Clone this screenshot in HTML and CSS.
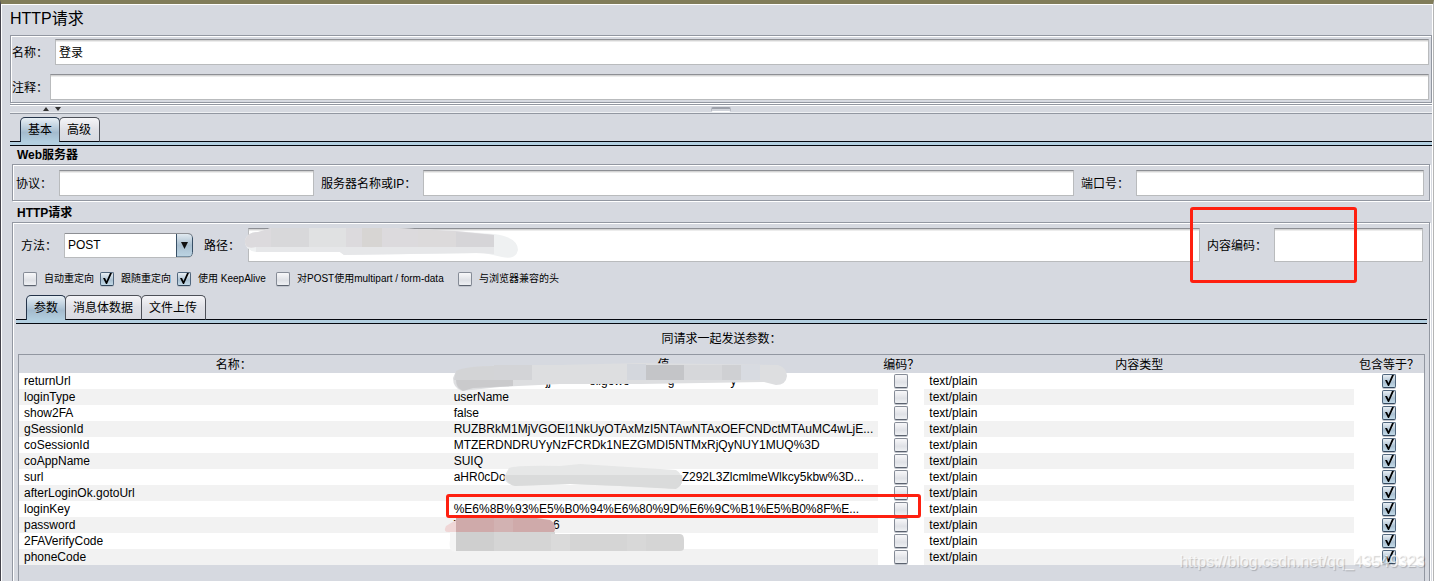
FILE: index.html
```
<!DOCTYPE html>
<html lang="zh-CN">

<head>
	<meta charset="UTF-8" />
	<meta name="viewport" content="width=device-width, initial-scale=1.0" />

	<title>HTTP请求</title>

	<link rel="stylesheet" href="styles.css">
</head>

<body>
	<main class="window">
		<h1>HTTP请求</h1>

		<div class="panel namePanel">
			<div class="row">
				<label class="wide" for="name">名称：</label>
				<input class="field" id="name" type="text" value="登录" />
			</div>
			<div class="row">
				<label for="comment">注释：</label>
				<input class="field" id="comment" type="text" />
			</div>
		</div>

		<div class="splitter">
			<svg class="arrows" width="18" height="5" viewBox="0 0 18 5">
				<path d="M0 4h6L3 0z M12 0h6l-3 4z" fill="#333" />
			</svg>
			<span class="grip"></span>
		</div>

		<div class="tabs">
			<button class="tab selected" type="button">基本</button>
			<button class="tab" type="button">高级</button>
		</div>

		<h2>Web服务器</h2>
		<div class="panel row serverPanel">
			<label for="protocol">协议：</label>
			<input class="field protocol" id="protocol" type="text" />
			<label for="server">服务器名称或IP：</label>
			<input class="field server" id="server" type="text" />
			<label for="port">端口号：</label>
			<input class="field port" id="port" type="text" />
		</div>

		<h2 class="second">HTTP请求</h2>
		<div class="panel requestPanel">
			<div class="row requestRow">
				<label for="method">方法：</label>
				<select id="method">
					<option>POST</option>
				</select>
				<label for="path">路径：</label>
				<div class="pathBox">
					<input class="field tall" id="path" type="text" />
					<svg class="smudge pathSmudge" width="278" height="34" viewBox="0 0 278 34">
						<path d="M14 4L27 0H150L212 3L250 6Q274 9 274 22Q272 32 258 29L240 25L100 27L96 24H12Q0 22 1 12Q4 4 14 4z" fill="#eff1f2" />
						<path d="M14 4L27 0H150L212 3L250 7V19H12Q0 22 1 12Q4 4 14 4z" fill="#dcdadd" />
						<path d="M27 0h38v19H27z" fill="#d8d8da" />
						<path d="M65 0h37v19H65z" fill="#e0e1e2" />
						<path d="M118 0h20v19h-20z" fill="#d7d5d3" />
						<path d="M174 1l38 3v15h-38z" fill="#dcdadb" />
						<path d="M212 4l38 3v12h-38z" fill="#d6d5d8" />
						<path d="M12 19h238v7l-18-1-132 2-4-3H12z" fill="#e6e7e9" />
					</svg>
				</div>
				<div class="row encodingBox">
					<label for="encoding">内容编码：</label>
					<input class="field tall encoding" id="encoding" type="text" />
					<span class="mark encodingMark"></span>
				</div>
			</div>

			<div class="options">
				<label><input type="checkbox" />自动重定向</label>
				<label><input type="checkbox" checked />跟随重定向</label>
				<label><input type="checkbox" checked />使用 KeepAlive</label>
				<label><input type="checkbox" />对POST使用multipart / form-data</label>
				<label><input type="checkbox" />与浏览器兼容的头</label>
			</div>

			<div class="tabs inner">
				<button class="tab selected" type="button">参数</button>
				<button class="tab" type="button">消息体数据</button>
				<button class="tab" type="button">文件上传</button>
			</div>

			<h3>同请求一起发送参数：</h3>

			<div class="tableBox">
				<table>
					<colgroup>
						<col />
						<col />
						<col class="encodeCol" />
						<col />
						<col class="equalsCol" />
					</colgroup>
					<thead>
						<tr>
							<th>名称：</th>
							<th>值</th>
							<th>编码？</th>
							<th>内容类型</th>
							<th>包含等于？</th>
						</tr>
					</thead>
					<tbody>
						<tr>
							<td>returnUrl</td>
							<td><span class="covered long"></span>jj<span class="covered short"></span>eilgowo<span class="covered short"></span>g<span class="covered medium"></span>y</td>
							<td class="check"><input type="checkbox" aria-label="编码 returnUrl" /></td>
							<td>text/plain</td>
							<td class="check"><input type="checkbox" aria-label="包含等于 returnUrl" checked /></td>
						</tr>
						<tr>
							<td>loginType</td>
							<td>userName</td>
							<td class="check"><input type="checkbox" aria-label="编码 loginType" /></td>
							<td>text/plain</td>
							<td class="check"><input type="checkbox" aria-label="包含等于 loginType" checked /></td>
						</tr>
						<tr>
							<td>show2FA</td>
							<td>false</td>
							<td class="check"><input type="checkbox" aria-label="编码 show2FA" /></td>
							<td>text/plain</td>
							<td class="check"><input type="checkbox" aria-label="包含等于 show2FA" checked /></td>
						</tr>
						<tr>
							<td>gSessionId</td>
							<td>RUZBRkM1MjVGOEI1NkUyOTAxMzI5NTAwNTAxOEFCNDctMTAuMC4wLjE...</td>
							<td class="check"><input type="checkbox" aria-label="编码 gSessionId" /></td>
							<td>text/plain</td>
							<td class="check"><input type="checkbox" aria-label="包含等于 gSessionId" checked /></td>
						</tr>
						<tr>
							<td>coSessionId</td>
							<td>MTZERDNDRUYyNzFCRDk1NEZGMDI5NTMxRjQyNUY1MUQ%3D</td>
							<td class="check"><input type="checkbox" aria-label="编码 coSessionId" /></td>
							<td>text/plain</td>
							<td class="check"><input type="checkbox" aria-label="包含等于 coSessionId" checked /></td>
						</tr>
						<tr>
							<td>coAppName</td>
							<td>SUIQ</td>
							<td class="check"><input type="checkbox" aria-label="编码 coAppName" /></td>
							<td>text/plain</td>
							<td class="check"><input type="checkbox" aria-label="包含等于 coAppName" checked /></td>
						</tr>
						<tr>
							<td>surl</td>
							<td>aHR0cDo<span class="covered url"></span>Z292L3ZlcmlmeWlkcy5kbw%3D...</td>
							<td class="check"><input type="checkbox" aria-label="编码 surl" /></td>
							<td>text/plain</td>
							<td class="check"><input type="checkbox" aria-label="包含等于 surl" checked /></td>
						</tr>
						<tr>
							<td>afterLoginOk.gotoUrl</td>
							<td></td>
							<td class="check"><input type="checkbox" aria-label="编码 afterLoginOk.gotoUrl" /></td>
							<td>text/plain</td>
							<td class="check"><input type="checkbox" aria-label="包含等于 afterLoginOk.gotoUrl" checked /></td>
						</tr>
						<tr>
							<td>loginKey</td>
							<td>%E6%8B%93%E5%B0%94%E6%80%9D%E6%9C%B1%E5%B0%8F%E...</td>
							<td class="check"><input type="checkbox" aria-label="编码 loginKey" /></td>
							<td>text/plain</td>
							<td class="check"><input type="checkbox" aria-label="包含等于 loginKey" checked /></td>
						</tr>
						<tr>
							<td>password</td>
							<td>T<span class="covered long"></span>6</td>
							<td class="check"><input type="checkbox" aria-label="编码 password" /></td>
							<td>text/plain</td>
							<td class="check"><input type="checkbox" aria-label="包含等于 password" checked /></td>
						</tr>
						<tr>
							<td>2FAVerifyCode</td>
							<td></td>
							<td class="check"><input type="checkbox" aria-label="编码 2FAVerifyCode" /></td>
							<td>text/plain</td>
							<td class="check"><input type="checkbox" aria-label="包含等于 2FAVerifyCode" checked /></td>
						</tr>
						<tr>
							<td>phoneCode</td>
							<td></td>
							<td class="check"><input type="checkbox" aria-label="编码 phoneCode" /></td>
							<td>text/plain</td>
							<td class="check"><input type="checkbox" aria-label="包含等于 phoneCode" checked /></td>
						</tr>
					</tbody>
				</table>

				<!-- brushed-out values -->
				<svg class="smudge tableSmudge" width="350" height="200" viewBox="440 360 350 200">
					<path d="M456 371Q470 364 560 365L640 363L778 365Q787 368 787 376Q786 385 776 385L764 382L640 384H560L500 387L462 391Q453 388 453 378z" fill="#dddee0" />
					<path d="M456 371Q466 366 494 366V380H454z" fill="#d3d4d6" />
					<path d="M456 380h57v6l-40 2-10 3q-7-3-7-11z" fill="#cacacc" />
					<path d="M494 365h38v15h-38z" fill="#d3d4d7" />
					<path d="M627 364h19v16h-19z" fill="#d4d7dd" />
					<path d="M646 365h38v15h-38z" fill="#c4c5c8" />
					<path d="M684 365h38v15h-38z" fill="#d6d7da" />
					<path d="M722 365h19v15h-19z" fill="#cfd0d3" />
					<path d="M741 365h19v15h-19z" fill="#d8dbe1" />

					<path d="M509 468Q516 465 560 466L580 464L676 470Q683 474 682 483Q676 491 665 488L620 486L570 484L515 486Q505 484 504 477z" fill="#e6e7e7" />
					<path d="M505 475H682Q684 485 676 489L620 486L570 484L515 486Q506 484 505 475z" fill="#dadbdb" />

					<path d="M456 520L446 526Q443 532 448 532H456z" fill="#efd6d6" />
					<path d="M456 518L530 517L550 520Q558 525 554 532H456z" fill="#cfaaaa" />
					<path d="M494 517h19v15h-19z" fill="#d2b2b2" />
					<path d="M450 532h6v20q-8 0-6-12z" fill="#f5f5f5" />
					<path d="M456 532h99v2H680Q684 534 684 540V548Q684 551 680 551H456z" fill="#d5d5d5" />
					<path d="M456 532h38v19h-38z" fill="#cfcfcf" />
					<path d="M551 534h19v17h-19z" fill="#dadada" />
					<path d="M627 534h19v17h-19z" fill="#d8d8d8" />
				</svg>
				<span class="mark keyMark"></span>
			</div>
		</div>

		<div class="watermark">https://blog.csdn.net/qq_43549323</div>
	</main>
</body>

</html>
```
FILE: styles.css
```
* {
	box-sizing: border-box;
}

body {
	margin: 0;
	overflow: hidden;
	font: 12px/16px "Liberation Sans", "Noto Sans CJK SC", sans-serif;
	color: black;
	background: #d6d9e0;
}

.window {
	position: relative;
	display: flex;
	flex-direction: column;
	height: 100vh;
	padding-left: 9px;
	padding-right: 1px;
	overflow: hidden;
	border-top: 4px solid #817d5a;
	border-left: 1px solid #45444c;
	border-right: 1px solid #b4b5b5;
	box-shadow: inset 1px 1px white, inset -1px 0 white;
}

h1,
h2,
h3 {
	margin: 0;
	flex: none;
}

h1 {
	height: 31px;
	font-size: 16px;
	font-weight: normal;
	line-height: 30px;
}

h2 {
	padding-left: 7px;
	font-size: 12px;
	line-height: 18px;
}

h2.second {
	padding-top: 3px;
}

h3 {
	font-size: 12px;
	font-weight: normal;
	line-height: 30px;
	text-align: center;
}

.panel {
	flex: none;
	border: 1px solid #9297a1;
	box-shadow: 1px 1px white, inset 1px 1px white;
}

.row {
	display: flex;
	align-items: center;
}

.row label {
	flex: none;
	padding-top: 2px;
	white-space: nowrap;
}

.field {
	min-width: 0;
	height: 26px;
	padding: 0 3px 1px;
	border: 1px solid #b9bbbd;
	border-top-color: #8d8f94;
	border-radius: 0;
	outline: 0;
	font: inherit;
	background: white;
	box-shadow: inset 0 1px #d4d4d4, inset 0 2px #ececec;
}

.field.tall {
	height: 34px;
}

.namePanel {
	display: flex;
	flex-direction: column;
	gap: 9px;
	padding: 3px 2px 2px 1px;
}

.namePanel .row {
	gap: 2px;
}

.namePanel .wide {
	padding-right: 5px;
}

.namePanel .field {
	flex: 1;
}

.splitter {
	position: relative;
	flex: none;
	display: flex;
	justify-content: center;
	height: 10px;
	margin-top: 1px;
	border: solid #9297a1;
	border-width: 1px 0;
	box-shadow: inset 0 1px white, inset 0 -1px #eef0f3;
}

.splitter .arrows {
	position: absolute;
	left: 33px;
	top: 2px;
}

.splitter .grip {
	width: 20px;
	height: 5px;
	margin-top: 2px;
	border: 1px solid #b4b8c0;
	border-top: 2px solid #9da1aa;
	border-bottom-color: white;
	border-radius: 2px;
	background: #d0d3da;
}

.tabs {
	flex: none;
	display: flex;
	height: 29px;
	margin-top: 3px;
	padding-left: 10px;
	/* the strip under the tabs */
	background: linear-gradient(#05080f 1px, #b3cfe0 1px, #b3cfe0 4px, #05080f 4px) bottom / 100% 5px no-repeat;
}

.tab {
	height: 25px;
	margin: 0 0 0 -1px;
	padding: 0 8px 0 7px;
	border: 1px solid #4d5058;
	border-bottom-color: #05080f;
	border-radius: 5px 5px 0 0;
	font: inherit;
	color: inherit;
	background: linear-gradient(#f5f5f8, #dfe0e6 50%, #d8dae1);
}

.tab.selected {
	margin-left: 0;
	padding: 0 7px 1px;
	border-color: #24344a;
	border-bottom: 0;
	background: linear-gradient(#e8eff5, #b0c5d6 50%, #a4bbce 60%, #b3cfe0);
}

.serverPanel {
	gap: 7px;
	margin: 0 2px;
	padding: 5px 5px 4px 3px;
}

.protocol {
	flex: 247 1 0;
}

.server {
	flex: 643 1 0;
}

.port {
	flex: 280 1 0;
}

.requestPanel {
	flex: 1 0 auto;
	margin: 0 2px;
	padding: 5px 2px 0 3px;
	border-bottom: 0;
}

.requestRow {
	gap: 7px;
	padding: 0 4px 0 5px;
}

select {
	width: 129px;
	height: 25px;
	margin-right: 4px;
	padding: 0 3px;
	border: 1px solid #b9bbbd;
	border-top-color: #8d8f94;
	border-right: 0;
	border-radius: 0 5px 5px 0;
	appearance: none;
	font: inherit;
	color: inherit;
	background: white url("data:image/svg+xml,%3Csvg xmlns='http://www.w3.org/2000/svg' width='17' height='25'%3E%3Cdefs%3E%3ClinearGradient id='g' x2='0' y2='1'%3E%3Cstop stop-color='%23e3ebf1'/%3E%3Cstop offset='.5' stop-color='%23a9bfd0'/%3E%3Cstop offset='1' stop-color='%23bdd5e4'/%3E%3C/linearGradient%3E%3C/defs%3E%3Cpath d='M.5 .5H12Q16.500 .5 16.500 5V19.500Q16.500 24 12 24H.5z' fill='url(%23g)' stroke='%23385067'/%3E%3Cpath d='M5 9h7l-3.500 7z' fill='%23111'/%3E%3C/svg%3E") right center / 17px 25px no-repeat border-box;
}

.pathBox {
	position: relative;
	flex: 1;
	display: flex;
	margin-left: 1px;
}

.pathBox .field {
	flex: 1;
}

.encodingBox {
	position: relative;
	gap: 7px;
}

.encoding {
	width: 149px;
}

.options {
	display: grid;
	grid-template-columns: 70px 70px 92px 175px auto;
	gap: 7px;
	height: 33px;
	padding-left: 7px;
	font-size: 10px;
	white-space: nowrap;
}

.options label {
	display: flex;
	align-items: center;
	gap: 7px;
}

input[type=checkbox] {
	flex: none;
	display: block;
	width: 14px;
	height: 14px;
	margin: 0;
	border: 1px solid #858b96;
	border-bottom-color: #5b626e;
	border-radius: 2px;
	appearance: none;
	background: linear-gradient(#f8f8fa, #dfe1e6 60%, #eef0f3);
	box-shadow: 0 1px #bfc3cb;
}

input[type=checkbox]:checked {
	border-color: #50667d;
	border-bottom-color: #33485e;
	background:
		url("data:image/svg+xml,%3Csvg xmlns='http://www.w3.org/2000/svg' width='12' height='12'%3E%3Cpath d='M2 5H4L5.500 8L9 0H11L6 11H5z'/%3E%3C/svg%3E") center / 12px 12px no-repeat,
		linear-gradient(#eaf0f5, #abc1d2 60%, #c3dae8);
}

.tabs.inner {
	margin: 0;
}

.tableBox {
	position: relative;
	height: 100vh;
	margin: 0 2px;
	border: 1px solid #9297a1;
}

table {
	width: 100%;
	table-layout: fixed;
	border-collapse: collapse;
}

.encodeCol {
	width: 46px;
}

.equalsCol {
	width: 70px;
}

th,
td {
	height: 16px;
	padding: 0 0 0 5px;
	overflow: hidden;
	white-space: nowrap;
}

th {
	height: 18px;
	padding: 2px 0 0;
	font-weight: normal;
}

td {
	line-height: 15px;
	background: white;
}

tbody tr:nth-child(even) td:not(.check) {
	background: #f2f2f2;
}

td.check {
	padding: 0;
}

td.check input {
	margin: 0 auto;
}

/* stretches of text hidden under the brush */
.covered {
	display: inline-block;
	width: 38px;
}

.covered.long {
	width: 92px;
}

.covered.medium {
	width: 56px;
}

.covered.url {
	width: 176px;
}

.smudge {
	position: absolute;
	pointer-events: none;
}

.pathSmudge {
	left: -4px;
	top: 0;
}

.tableSmudge {
	left: 421px;
	top: 5px;
}

.mark {
	position: absolute;
	border: 3px solid #fe2010;
	border-radius: 3px;
	pointer-events: none;
}

.encodingMark {
	left: -17px;
	top: -21px;
	width: 167px;
	height: 76px;
}

.keyMark {
	left: 427px;
	top: 139px;
	width: 475px;
	height: 24px;
}

.watermark {
	position: absolute;
	right: 8px;
	bottom: 9px;
	font-size: 16px;
	line-height: 20px;
	color: #ffffffb0;
	text-shadow: 1px 1px 1px #00000033;
}
```
